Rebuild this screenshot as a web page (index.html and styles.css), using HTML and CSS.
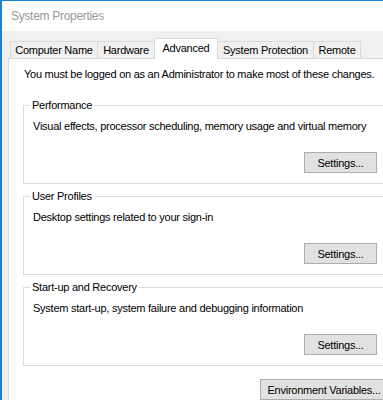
FILE: index.html
```html
<!DOCTYPE html>
<html lang="en">
<head>
<meta charset="utf-8">
<title>System Properties</title>
<link rel="stylesheet" href="styles.css">
</head>
<body>
<div class="window">
  <div class="titlebar">System Properties</div>
  <div class="client">
    <div class="tabs">
      <div class="tab tab-name">Computer Name</div>
      <div class="tab tab-hw">Hardware</div>
      <div class="tab tab-adv active">Advanced</div>
      <div class="tab tab-sp">System Protection</div>
      <div class="tab tab-rem">Remote</div>
    </div>
    <div class="panel">
      <p class="intro">You must be logged on as an Administrator to make most of these changes.</p>
      <fieldset class="group">
        <legend>Performance</legend>
        <p>Visual effects, processor scheduling, memory usage and virtual memory</p>
        <div class="actions"><button class="btn">Settings...</button></div>
      </fieldset>
      <fieldset class="group">
        <legend>User Profiles</legend>
        <p>Desktop settings related to your sign-in</p>
        <div class="actions"><button class="btn">Settings...</button></div>
      </fieldset>
      <fieldset class="group">
        <legend>Start-up and Recovery</legend>
        <p>System start-up, system failure and debugging information</p>
        <div class="actions"><button class="btn">Settings...</button></div>
      </fieldset>
      <div class="envrow"><button class="btn env">Environment Variables...</button></div>
    </div>
  </div>
</div>
</body>
</html>
```
FILE: styles.css
```css
* { box-sizing: border-box; }
html, body { margin: 0; padding: 0; }
body {
  width: 383px;
  height: 400px;
  overflow: hidden;
  font-family: "Liberation Sans", Arial, sans-serif;
  font-size: 11px;
  letter-spacing: -0.25px;
  color: #000;
  background: #f0f0f0;
}
.window {
  height: 400px;
  border-left: 2px solid #1883d7;
  border-top: 1px solid #1883d7;
  background: #f0f0f0;
  overflow: hidden;
}
.titlebar {
  height: 30px;
  background: #fff;
  padding-left: 9px;
  line-height: 30px;
  font-size: 12px;
  letter-spacing: -0.3px;
  color: #999;
}
.client { padding: 7px 0 0 6px; }
.tabs {
  display: flex;
  align-items: flex-end;
  height: 21px;
  padding-left: 2px;
}
.tab {
  flex: none;
  height: 17px;
  margin-bottom: 1px;
  margin-left: -1px;
  border: 1px solid #d9d9d9;
  border-bottom: 0;
  background: #f0f0f0;
  text-align: center;
  line-height: 16px;
  white-space: nowrap;
}
.tab:first-child { margin-left: 0; }
.tab.active {
  height: 21px;
  margin-bottom: 0;
  background: #fff;
  position: relative;
  z-index: 1;
  line-height: 19px;
}
.tab-name { width: 88px; }
.tab-hw { width: 58px; }
.tab-adv { width: 64px; }
.tab-sp { width: 97px; }
.tab-rem { width: 48px; }
.panel {
  width: 399px;
  height: 360px;
  margin-top: -1px;
  background: #fff;
  border: 1px solid #d9d9d9;
  padding: 8px 14px 0;
}
.intro {
  margin: 0 0 0 1px;
  line-height: 15px;
  white-space: nowrap;
}
.group {
  margin: 16px 0 0;
  padding: 6px 14px 10px 9px;
  border: 1px solid #dcdcdc;
  min-width: 0;
}
.group + .group { margin-top: 5px; }
.group legend {
  padding: 0 2px;
  margin-left: -3px;
  line-height: 15px;
}
.group p {
  margin: 0;
  line-height: 15px;
  white-space: nowrap;
}
.actions {
  display: flex;
  justify-content: flex-end;
  margin-top: 18px;
}
.btn {
  width: 73px;
  height: 21px;
  padding: 0;
  background: #e1e1e1;
  border: 1px solid #adadad;
  border-radius: 0;
  font: inherit;
  letter-spacing: inherit;
  color: #000;
  white-space: nowrap;
}
.envrow {
  display: flex;
  justify-content: flex-end;
  margin-top: 13px;
}
.btn.env {
  width: 128px;
  margin-right: 4px;
}
```
